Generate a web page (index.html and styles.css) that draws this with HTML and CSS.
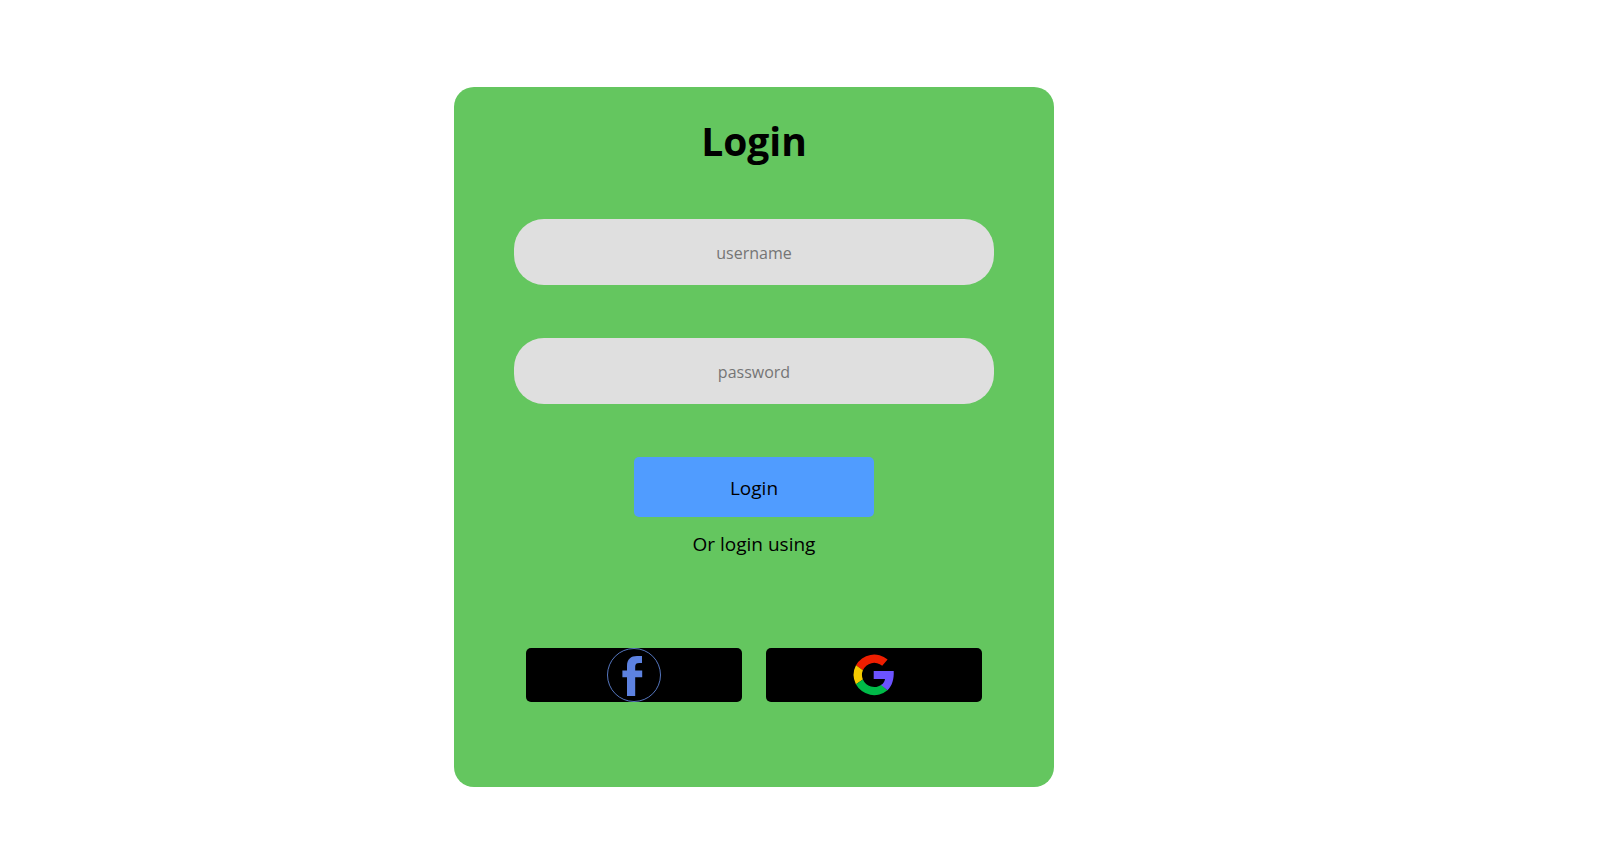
FILE: index.html
```
<!DOCTYPE html>
<html lang="en">
<head>
    <meta charset="UTF-8">
    <meta name="viewport" content="width=device-width, initial-scale=1.0">
    <title>Login</title>
    <link rel="stylesheet" href="styles.css">
</head>
<body>

    <main class="container">
        <form class="login-card">
            <h1>Login</h1>

            <input class="field" type="text" name="username" placeholder="username" aria-label="username">
            <input class="field" type="password" name="password" placeholder="password" aria-label="password">

            <button class="login-btn" type="submit">Login</button>
            <p>Or login using</p>

            <!-- Social login -->
            <div class="social">
                <button class="social-btn" type="button" aria-label="Facebook">
                    <svg viewBox="0 0 54 54">
                        <circle cx="27" cy="27" r="26.5" fill="none" stroke="#5576be" stroke-width="1"/>
                        <path fill="#5d82e0" d="M20 48V29.3H15.4V22.6H20V18C20 11 24 8 30 8H35V15H32.2C29.5 15 28.2 16 28.2 18.5V22.6H35.2V29.3H28.2V48Z"/>
                    </svg>
                </button>
                <button class="social-btn" type="button" aria-label="Google">
                    <svg viewBox="0 0 54 54">
                        <path fill="#ee1e00" d="M9 17.3A20.8 20.8 0 0 1 40.6 11.5L35.2 17.7A12.4 12.4 0 0 0 15.9 22.2Z"/>
                        <path fill="#f6cb00" d="M9 17.3L15.9 22.2A12 12 0 0 0 15.9 31.5L8.9 36.2A20.7 20.7 0 0 1 9 17.3Z"/>
                        <path fill="#00ba48" d="M8.9 36.2L15.9 31.5A12.4 12.4 0 0 0 34.5 36.8L40.5 42.3A20.7 20.7 0 0 1 8.9 36.2Z"/>
                        <path fill="#6c53ff" d="M26.7 23H46.7C47.2 31 45 38 40.5 42.3L34 37C36.3 35.6 37.6 34 38 31H26.7Z"/>
                    </svg>
                </button>
            </div>
        </form>
    </main>

</body>
</html>
```
FILE: styles.css
```
body {
    margin: 0;
    background: #fff;
    font-family: 'Segoe UI', 'Open Sans', 'Noto Sans', sans-serif;
}

.container {
    display: flex;
    justify-content: center;
    padding: 87px 92px 60px 0;
}

.login-card {
    width: 100%;
    max-width: 600px;
    padding: 27px 60px 85px;
    box-sizing: border-box;
    background: #64c65f;
    border-radius: 20px;
    display: flex;
    flex-direction: column;
    align-items: center;
}

h1 {
    margin: 0 0 51px;
    font-size: 39px;
    line-height: 54px;
}

.field {
    width: 100%;
    height: 66px;
    margin-bottom: 53px;
    padding: 2px 20px 0;
    box-sizing: border-box;
    border: none;
    border-radius: 30px;
    background: #dfdfdf;
    font-family: inherit;
    font-size: 16px;
    text-align: center;
}

.field::placeholder {
    color: #757575;
}

.login-btn {
    width: 50%;
    height: 60px;
    padding: 2px 0 0;
    border: none;
    border-radius: 5px;
    background: #509cff;
    color: #000;
    font-family: inherit;
    font-size: 19px;
    cursor: pointer;
}

p {
    margin: 14px 0 90px;
    font-size: 19px;
    line-height: 27px;
}

.social {
    width: 100%;
    display: flex;
    gap: 24px;
    padding: 0 12px;
    box-sizing: border-box;
}

.social-btn {
    flex: 1;
    height: 54px;
    padding: 0;
    border: none;
    border-radius: 5px;
    background: #000;
    cursor: pointer;
}

.social-btn svg {
    display: block;
    width: 54px;
    height: 54px;
    margin: 0 auto;
}
```
